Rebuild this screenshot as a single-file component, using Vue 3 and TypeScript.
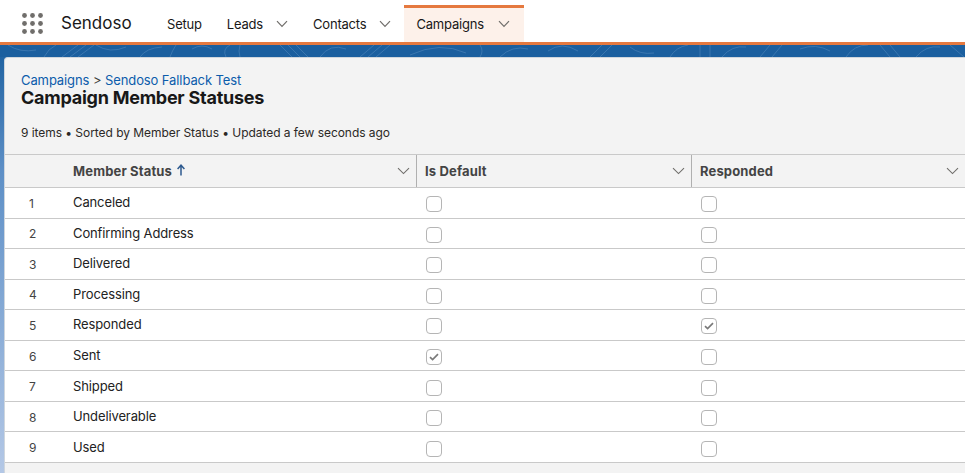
<script setup lang="ts">
interface Status {
  name: string;
  isDefault: boolean;
  responded: boolean;
}

const navItems = [
  { label: "Setup", menu: false, active: false },
  { label: "Leads", menu: true, active: false },
  { label: "Contacts", menu: true, active: false },
  { label: "Campaigns", menu: true, active: true },
];

const statuses: Status[] = [
  { name: "Canceled", isDefault: false, responded: false },
  { name: "Confirming Address", isDefault: false, responded: false },
  { name: "Delivered", isDefault: false, responded: false },
  { name: "Processing", isDefault: false, responded: false },
  { name: "Responded", isDefault: false, responded: true },
  { name: "Sent", isDefault: true, responded: false },
  { name: "Shipped", isDefault: false, responded: false },
  { name: "Undeliverable", isDefault: false, responded: false },
  { name: "Used", isDefault: false, responded: false },
];

const dots = [0, 1, 2, 3, 4, 5, 6, 7, 8];
</script>

<template>
  <div class="page">
    <nav class="nav">
      <svg class="launcher" width="21" height="21" viewBox="0 0 21 21">
        <circle
          v-for="d in dots"
          :key="d"
          :cx="2.5 + (d % 3) * 8"
          :cy="2.5 + Math.floor(d / 3) * 8"
          r="2.4"
          fill="#706e6b"
        />
      </svg>
      <span class="brand">Sendoso</span>
      <ul class="tabs">
        <li
          v-for="item in navItems"
          :key="item.label"
          :class="['tab', { active: item.active }]"
        >
          <span>{{ item.label }}</span>
          <svg v-if="item.menu" class="chev" width="12" height="8" viewBox="0 0 12 8">
            <path d="M1 1.2 6 6.4 11 1.2" fill="none" stroke="#706e6b" stroke-width="1.2" />
          </svg>
        </li>
      </ul>
    </nav>

    <svg class="texture" width="965" height="12" viewBox="0 0 965 12">
      <g fill="none" stroke="#4f86bb" stroke-width="0.8" opacity="0.75">
        <path d="M8 0q12 8 28 5M44 12q4-8 12-12M62 12l16-12M70 12l16-12M78 12l16-12M96 0q14 9 30 2" />
        <path d="M140 12q6-9 22-10M170 12q2-6 6-12M192 4q10-6 20 0M226 12q-4-8 4-12M240 12q-2-6 0-12" />
        <path d="M280 0l12 12M288 0l12 12M296 0l12 12M320 12q10-14 26-8M360 12l14-12M368 12l14-12M376 12l14-12" />
        <path d="M410 10q30-14 56-2M480 0q4 6 0 12M500 12q12-12 28-8M548 6q14-10 30 0M590 12l12-12M600 12l12-12" />
        <path d="M630 2q10 8 24 6M670 12q6-10 18-12M700 0v12M710 0v12M722 12q10-12 24-10M760 12l10-12M772 12l10-12" />
        <path d="M800 4q16-6 30 2M846 12q8-12 22-12M880 0l10 12M890 0l10 12M916 12q10-12 24-10M950 0l14 12" />
      </g>
    </svg>

    <main class="card">
      <header class="head">
        <div class="crumbs">
          <a>Campaigns</a> <span class="sep">&gt;</span> <a>Sendoso Fallback Test</a>
        </div>
        <h1 class="title">Campaign Member Statuses</h1>
        <p class="meta">9 items • Sorted by Member Status • Updated a few seconds ago</p>
      </header>

      <div class="table">
        <div class="row header-row">
          <div class="cell num"></div>
          <div class="cell th">
            <span class="th-label">Member Status</span>
            <svg class="sort" width="10" height="12" viewBox="0 0 10 12">
              <path d="M5 11.5V1.5M1.6 5 5 1.2 8.4 5" fill="none" stroke="#2e5a8f" stroke-width="1.5" />
            </svg>
            <svg class="th-chev" width="13" height="8" viewBox="0 0 13 8">
              <path d="M1 1.2 6.5 6.6 12 1.2" fill="none" stroke="#706e6b" stroke-width="1.1" />
            </svg>
          </div>
          <div class="cell th divided">
            <span class="th-label">Is Default</span>
            <svg class="th-chev" width="13" height="8" viewBox="0 0 13 8">
              <path d="M1 1.2 6.5 6.6 12 1.2" fill="none" stroke="#706e6b" stroke-width="1.1" />
            </svg>
          </div>
          <div class="cell th divided">
            <span class="th-label">Responded</span>
            <svg class="th-chev" width="13" height="8" viewBox="0 0 13 8">
              <path d="M1 1.2 6.5 6.6 12 1.2" fill="none" stroke="#706e6b" stroke-width="1.1" />
            </svg>
          </div>
        </div>

        <div v-for="(s, i) in statuses" :key="s.name" class="row body-row">
          <div class="cell num">{{ i + 1 }}</div>
          <div class="cell name">{{ s.name }}</div>
          <div class="cell check">
            <span class="box">
              <svg v-if="s.isDefault" width="10" height="8" viewBox="0 0 10 8">
                <path d="M1 4.2 3.6 6.6 9 1.2" fill="none" stroke="#7a7a7a" stroke-width="1.7" />
              </svg>
            </span>
          </div>
          <div class="cell check">
            <span class="box">
              <svg v-if="s.responded" width="10" height="8" viewBox="0 0 10 8">
                <path d="M1 4.2 3.6 6.6 9 1.2" fill="none" stroke="#7a7a7a" stroke-width="1.7" />
              </svg>
            </span>
          </div>
        </div>
      </div>
    </main>
  </div>
</template>

<style scoped>
.page {
  width: 965px;
  height: 473px;
  overflow: hidden;
  display: flex;
  flex-direction: column;
  font-family: Inter, "Liberation Sans", sans-serif;
  color: #181818;
  background: linear-gradient(180deg, #1b5f9f 45px, #5d8fc6 170px, #b4c8e6 473px);
}

.nav {
  height: 42px;
  flex-shrink: 0;
  display: flex;
  align-items: center;
  background: #fff;
  border-bottom: 3px solid #e5793f;
  padding-left: 22px;
}

.launcher {
  flex-shrink: 0;
  margin-top: 5px;
}

.brand {
  margin-left: 18px;
  font-size: 17px;
  width: 93px;
  margin-top: 3px;
}

.tabs {
  list-style: none;
  margin: 0;
  padding: 0;
  display: flex;
  align-self: stretch;
}

.tab {
  display: flex;
  align-items: center;
  padding: 3px 12px 0 13px;
  font-size: 13px;
  letter-spacing: -0.2px;
  border-top: 3px solid transparent;
}
.tab.active {
  background: #fdf1ea;
  border-top-color: #e5793f;
  margin: 5px 0 0 1px;
  padding: 0 14px 2px 12px;
}
.tab.active .chev {
  margin-left: 14px;
}
.tab span {
  margin-top: -1px;
}

.chev {
  margin-left: 13px;
}

.texture {
  display: block;
  flex-shrink: 0;
  background: #1b5f9f;
}

.card {
  flex: 1;
  margin-left: 4px;
  background: #f3f3f3;
  border-top-left-radius: 4px;
  border-top: 1px solid #cfd6dd;
  border-left: 1px solid #cfd6dd;
}

.head {
  height: 96px;
  padding: 15px 0 0 16px;
  box-sizing: border-box;
}

.crumbs {
  font-size: 13px;
  line-height: 15px;
  letter-spacing: -0.1px;
  color: #3e3e3c;
}
.crumbs a {
  color: #0b5cab;
}

.title {
  margin: 0;
  font-size: 18px;
  line-height: 20px;
  font-weight: 700;
  letter-spacing: -0.25px;
  color: #181818;
}

.meta {
  margin: 17px 0 0;
  font-size: 12px;
  line-height: 16px;
  letter-spacing: -0.05px;
  color: #2b2826;
}

.table {
  display: flex;
  flex-direction: column;
  border-top: 1px solid #c9c9c9;
}

.row {
  display: grid;
  grid-template-columns: 68px 343px 275px 1fr;
  box-sizing: border-box;
  border-bottom: 1px solid #c9c9c9;
}

.header-row {
  height: 33px;
  background: #f3f3f3;
}

.body-row {
  height: 30.56px;
  background: #fff;
}

.cell {
  display: flex;
  align-items: center;
  font-size: 13px;
}

.num {
  padding-left: 24px;
  font-size: 12px;
  color: #444;
  padding-top: 1px;
}

.th {
  padding-right: 6px;
  font-weight: 700;
  letter-spacing: 0.15px;
  color: #444;
}
.th-label {
  margin-top: -1px;
}
.th.divided {
  padding-left: 8px;
  border-left: 1px solid #b0b0b0;
}

.sort {
  margin-left: 4px;
  margin-top: -2px;
}

.th-chev {
  margin-left: auto;
}

.name {
  color: #222;
  letter-spacing: -0.12px;
  margin-top: -1px;
}

.check {
  padding: 3px 0 0 10px;
}
.box {
  width: 16px;
  height: 16px;
  box-sizing: border-box;
  display: flex;
  align-items: center;
  justify-content: center;
  background: #fff;
  border: 1px solid #b5b5b5;
  border-radius: 4px;
}
</style>

<style>
body {
  margin: 0;
}
</style>
